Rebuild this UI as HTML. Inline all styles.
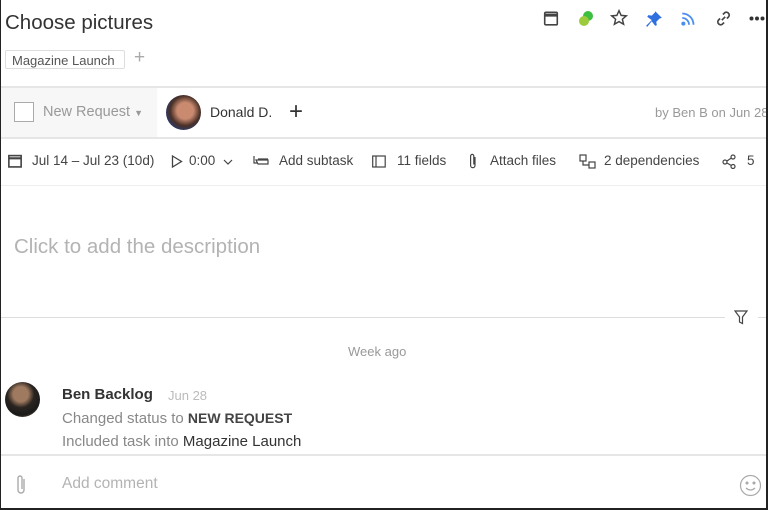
<!DOCTYPE html>
<html><head><meta charset="utf-8"><style>
*{margin:0;padding:0;box-sizing:border-box}
body{width:768px;height:510px;background:#fff;font-family:"Liberation Sans",sans-serif;position:relative;overflow:hidden;color:#333}
.a{position:absolute}
.frame{position:absolute;left:0;top:0;width:768px;height:510px;border-left:1px solid #222;border-right:2px solid #222;border-bottom:2px solid #222;pointer-events:none}
.ic{position:absolute;stroke:#444;fill:none;stroke-width:1.5}
.t{position:absolute;font-size:13.5px;color:#444;white-space:nowrap}
</style></head><body>
<div class="a" style="left:5px;top:11px;font-size:20.5px;color:#333">Choose pictures</div>
<div class="a" style="left:5px;top:50px;width:120px;height:19px;border:1px solid #ddd;border-radius:2px;font-size:13px;color:#555;padding:2px 0 0 6px">Magazine Launch</div>
<div class="a" style="left:134px;top:47px;font-size:19px;color:#aaa">+</div>
<!-- top icons -->
<svg class="ic" style="left:543px;top:10px" width="16" height="16" viewBox="0 0 14 14"><rect x="1.5" y="2" width="11" height="11" rx="1" stroke-width="1.4"/><path d="M1.5 4.5h11" stroke-width="2.6"/></svg>
<svg class="a" style="left:577px;top:9px" width="18" height="18"><circle cx="11" cy="7" r="5" fill="#3fbf3f"/><circle cx="7" cy="12" r="5" fill="#9ccc3c"/></svg>
<svg class="ic" style="left:610px;top:9px" width="18" height="18" viewBox="0 0 16 16"><path d="M8 1.5l1.9 4.2 4.6.4-3.5 3 1.1 4.5L8 11.2l-4.1 2.4 1.1-4.5-3.5-3 4.6-.4z" stroke-width="1.3"/></svg>
<svg class="a" style="left:645px;top:10px" width="18" height="18" viewBox="0 0 16 16"><path d="M9 1l6 6-2 .5-3 3 .5 3L9 14 6 10 2 15 1 14l5-5-4-3 1-1.5 3 .5 3-3z" fill="#2f6fe0"/></svg>
<svg class="a" style="left:680px;top:9px" width="18" height="18" viewBox="0 0 16 16" fill="none" stroke="#4a8ef0" stroke-width="1.6"><circle cx="3" cy="13" r="1.8" fill="#4a8ef0" stroke="none"/><path d="M2 8a6 6 0 0 1 6 6M2 4a10 10 0 0 1 10 10"/></svg>
<svg class="ic" style="left:715px;top:10px" width="17" height="17" viewBox="0 0 15 15"><path d="M6 9l3-3M7 4l1.5-1.5a2.5 2.5 0 0 1 3.5 3.5L10.5 7.5M8 11l-1.5 1.5a2.5 2.5 0 0 1-3.5-3.5L4.5 7.5"/></svg>
<svg class="a" style="left:749px;top:16px" width="16" height="5"><circle cx="2.5" cy="2.5" r="2" fill="#333"/><circle cx="8" cy="2.5" r="2" fill="#333"/><circle cx="13.5" cy="2.5" r="2" fill="#333"/></svg>
<!-- row 2 -->
<div class="a" style="left:0;top:86px;width:768px;height:2px;background:#e6e6e6"></div>
<div class="a" style="left:0;top:88px;width:157px;height:49px;background:#f7f7f7"></div>
<div class="a" style="left:0;top:137px;width:768px;height:2px;background:#e6e6e6"></div>
<div class="a" style="left:14px;top:102px;width:20px;height:20px;border:1.5px solid #aaa;background:#fff"></div>
<div class="t" style="left:43px;top:104px;color:#999;font-size:14.5px">New Request <span style="font-size:9px">▼</span></div>
<div class="a" style="left:166px;top:95px;width:35px;height:35px;border-radius:50%;background:radial-gradient(circle at 55% 45%,#c98a70 0 30%,#4a3026 55%,#2a3a6a 75%,#d8c8c0)"></div>
<div class="t" style="left:210px;top:104px;color:#333;font-size:14px">Donald D.</div>
<div class="a" style="left:289px;top:98px;font-size:24px;color:#333;font-weight:300">+</div>
<div class="t" style="left:655px;top:105px;color:#999;font-size:13px">by Ben B on Jun 28</div>
<!-- row 3 -->
<svg class="ic" style="left:8px;top:154px" width="14" height="14" viewBox="0 0 13 13"><rect x=".8" y="1.5" width="11.4" height="10.5"/><path d="M1 4h11" stroke-width="2"/></svg>
<div class="t" style="left:32px;top:153px">Jul 14 – Jul 23 (10d)</div>
<svg class="ic" style="left:171px;top:155px" width="12" height="13"><path d="M1.5 1l9 5.5-9 5.5z" stroke-width="1.3"/></svg>
<div class="t" style="left:189px;top:153px">0:00</div>
<svg class="ic" style="left:223px;top:159px" width="10" height="6"><path d="M1 1l4 4 4-4" stroke-width="1.2"/></svg>
<svg class="ic" style="left:253px;top:155px" width="16" height="13" viewBox="0 0 16 13"><path d="M1 1v7h4M3 5h12v4H5zM5 4h10" stroke-width="1.2"/></svg>
<div class="t" style="left:279px;top:153px">Add subtask</div>
<svg class="ic" style="left:372px;top:155px" width="14" height="13"><rect x=".7" y="1" width="12.5" height="11" stroke-width="1.2"/><path d="M4 1v11" stroke-width="1.2"/></svg>
<div class="t" style="left:397px;top:153px">11 fields</div>
<svg class="ic" style="left:468px;top:153px" width="10" height="17" viewBox="0 0 10 17"><path d="M7 4v8.5a2.2 2.2 0 0 1-4.4 0V3a1.6 1.6 0 0 1 3.2 0v8.5" stroke-width="1.2"/></svg>
<div class="t" style="left:490px;top:153px">Attach files</div>
<svg class="ic" style="left:579px;top:154px" width="17" height="15"><rect x="1" y="1" width="6" height="6" stroke-width="1.2"/><rect x="10" y="8" width="6" height="6" stroke-width="1.2"/><path d="M4 7v4h6" stroke-width="1.2"/></svg>
<div class="t" style="left:604px;top:153px">2 dependencies</div>
<svg class="ic" style="left:722px;top:154px" width="15" height="15"><circle cx="3" cy="8" r="2" stroke-width="1.2"/><circle cx="11" cy="3" r="2" stroke-width="1.2"/><circle cx="11" cy="12.5" r="2" stroke-width="1.2"/><path d="M5 7l4.3-3M5 9l4.3 2.5" stroke-width="1.2"/></svg>
<div class="t" style="left:747px;top:153px">5</div>
<!-- description -->
<div class="a" style="left:0;top:185px;width:768px;height:1px;background:#eee"></div>
<div class="t" style="left:14px;top:235px;font-size:20.5px;color:#b3b3b3">Click to add the description</div>
<div class="a" style="left:0;top:317px;width:725px;height:1px;background:#ddd"></div>
<div class="a" style="left:758px;top:317px;width:10px;height:1px;background:#ddd"></div>
<svg class="ic" style="left:734px;top:310px" width="14" height="15"><path d="M1 1h12L8.5 7v6.5L5.5 12V7z" stroke-width="1.2"/></svg>
<div class="t" style="left:348px;top:344px;color:#999;font-size:13px">Week ago</div>
<div class="a" style="left:5px;top:382px;width:35px;height:35px;border-radius:50%;background:radial-gradient(circle at 45% 35%,#a07a60 0 25%,#2a2420 45%,#1a1a1a 70%,#c49a70)"></div>
<div class="t" style="left:62px;top:386px;font-size:15px;color:#333;font-weight:bold">Ben Backlog</div>
<div class="t" style="left:168px;top:388px;font-size:13px;color:#bbb">Jun 28</div>
<div class="t" style="left:62px;top:410px;font-size:15px;color:#888">Changed status to <span style="color:#444;font-weight:bold;font-size:14px">NEW REQUEST</span></div>
<div class="t" style="left:62px;top:433px;font-size:15px;color:#888">Included task into <span style="color:#333">Magazine Launch</span></div>
<!-- comment bar -->
<div class="a" style="left:0;top:454px;width:768px;height:56px;background:#fff;border-top:2px solid #e6e6e6"></div>
<svg class="ic" style="left:15px;top:474px;stroke:#aaa" width="12" height="22" viewBox="0 0 12 22"><path d="M9 5v11a3 3 0 0 1-6 0V4a2 2 0 0 1 4 0v11" stroke-width="1.4"/></svg>
<div class="t" style="left:62px;top:475px;font-size:15.5px;color:#b3b3b3">Add comment</div>
<svg class="ic" style="left:739px;top:474px;stroke:#aaa" width="23" height="23"><circle cx="11.5" cy="11.5" r="10" stroke-width="1.2"/><circle cx="8" cy="9" r=".8" fill="#aaa"/><circle cx="15" cy="9" r=".8" fill="#aaa"/><path d="M7 14q4.5 4 9 0" stroke-width="1.2"/></svg>
<div class="frame"></div>
</body></html>
